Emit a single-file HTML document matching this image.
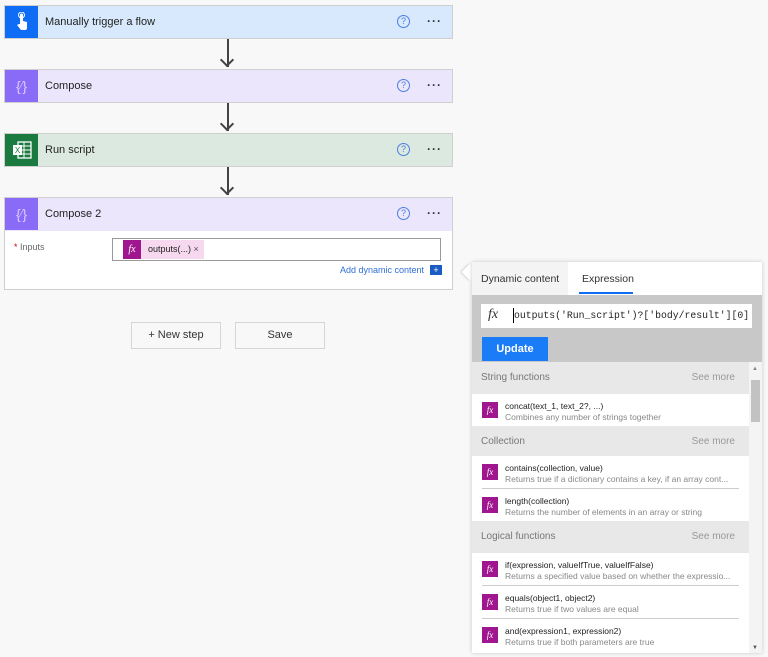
<!DOCTYPE html>
<html><head><style>
*{box-sizing:border-box;margin:0;padding:0}
body{width:768px;height:657px;background:#f8f8f8;font-family:"Liberation Sans",sans-serif;position:relative;overflow:hidden;color:#333}
.card{position:absolute;left:4px;width:449px;height:34px;border:1px solid #cfcfcf}
.ic{position:absolute;left:0;top:0;width:33px;height:32px;display:flex;align-items:center;justify-content:center}
.t{position:absolute;left:40px;top:10px;font-size:11px;color:#222}
.q{position:absolute;left:392px;top:9px;width:13px;height:13px;border:1.3px solid #4a7ee0;border-radius:50%;font-size:9px;color:#4a7ee0;text-align:center;line-height:11px}
.d{position:absolute;left:422px;top:8px;font-size:12px;letter-spacing:1px;color:#333;font-weight:bold}
.arr{position:absolute;left:227px;width:2px;background:#444}
.ah{position:absolute;left:222px;width:10px;height:10px;border-right:2px solid #444;border-bottom:2px solid #444;transform:rotate(45deg)}
.btn{position:absolute;top:322px;height:27px;border:1px solid #d6d6d6;background:#f8f8f8;font-size:11px;text-align:center;line-height:25px;color:#333}
.panel{position:absolute;left:472px;top:262px;width:290px;height:391px;background:#fff;box-shadow:0 0 4px rgba(0,0,0,.2)}
.hd{position:absolute;left:0;width:277px;height:32px;background:#e8e8e8;font-size:10px;color:#777;padding:10px 9px}
.hd span{position:absolute;right:14px;top:10px;color:#999}
.it{position:absolute;left:0;width:277px;height:33px;background:#fff}
.it .fx{position:absolute;left:10px;top:8px;width:16px;height:16px;background:#a0168e;color:#fff;font-family:"Liberation Serif",serif;font-style:italic;font-size:9px;text-align:center;line-height:16px}
.it b{position:absolute;left:33px;top:7px;font-size:8.5px;font-weight:normal;color:#222}
.it i{position:absolute;left:33px;top:18px;font-size:8.5px;font-style:normal;color:#888;white-space:nowrap}
.it.l::after{content:"";position:absolute;left:10px;right:10px;bottom:0;border-bottom:1px solid #ccc}
</style></head><body>
<div class="card" style="top:5px;background:#d8e9fd"><div class="ic" style="background:#0f6cf5"><svg width="16" height="20" viewBox="0 0 16 20"><path d="M6 12V3a1.5 1.5 0 013 0v6l4 1v6a2 2 0 01-2 2H7l-4-5 2-1z" fill="#fff"/><circle cx="7.5" cy="3" r="3" fill="none" stroke="#fff" stroke-width="1"/></svg></div><div class="t">Manually trigger a flow</div><div class="q">?</div><div class="d">···</div></div>
<div class="arr" style="top:39px;height:28px"></div><div class="ah" style="top:55px"></div>
<div class="card" style="top:69px;background:#ece6fc"><div class="ic" style="background:#8a6bf7;color:#d8ccff;font-size:14px">{<span style="font-size:10px">∕</span>}</div><div class="t">Compose</div><div class="q">?</div><div class="d">···</div></div>
<div class="arr" style="top:103px;height:28px"></div><div class="ah" style="top:119px"></div>
<div class="card" style="top:133px;background:#dce9e1"><div class="ic" style="background:#1b7a3f"><svg width="20" height="18" viewBox="0 0 20 18"><rect x="6" y="1" width="13" height="16" fill="none" stroke="#fff" stroke-width="1.3"/><path d="M6 5h13M6 9h13M6 13h13M12 1v16" stroke="#fff" stroke-width="1"/><rect x="1" y="4" width="9" height="10" fill="#fff"/><text x="5.5" y="12" font-size="8" fill="#1b7a3f" text-anchor="middle" font-family="Liberation Sans">X</text></svg></div><div class="t">Run script</div><div class="q">?</div><div class="d">···</div></div>
<div class="arr" style="top:167px;height:28px"></div><div class="ah" style="top:183px"></div>
<div class="card" style="top:197px;height:93px;background:#fff"><div style="position:absolute;left:0;top:0;width:447px;height:33px;background:#ece6fc"></div><div class="ic" style="background:#8a6bf7;color:#d8ccff;font-size:14px">{<span style="font-size:10px">∕</span>}</div><div class="t">Compose 2</div><div class="q">?</div><div class="d">···</div>
<div style="position:absolute;left:9px;top:44px;font-size:9px;color:#666"><span style="color:#c00">*</span> Inputs</div>
<div style="position:absolute;left:107px;top:40px;width:329px;height:23px;border:1px solid #999;background:#fff"><div style="position:absolute;left:10px;top:1px;width:81px;height:19px;background:#f6d9ee"><div style="position:absolute;left:0;top:0;width:18px;height:19px;background:#a0168e;color:#fff;font-family:'Liberation Serif',serif;font-style:italic;font-size:10px;text-align:center;line-height:19px">fx</div><span style="position:absolute;left:25px;top:4px;font-size:9px;color:#222">outputs(...) <span style="color:#555">×</span></span></div></div>
<div style="position:absolute;left:335px;top:67px;font-size:9px;color:#2f6fd4">Add dynamic content</div><div style="position:absolute;left:425px;top:67px;width:12px;height:10px;background:#1a5bc4;color:#fff;font-size:9px;text-align:center;line-height:10px">+</div>
</div>
<div class="btn" style="left:131px;width:90px">+ New step</div>
<div class="btn" style="left:235px;width:90px">Save</div>
<div style="position:absolute;left:464px;top:266px;width:12px;height:12px;background:#fff;transform:rotate(45deg);box-shadow:-1px 1px 2px rgba(0,0,0,.15)"></div>
<div class="panel">
<div style="position:absolute;left:0;top:0;width:96px;height:33px;background:#f4f4f4;font-size:10.5px;color:#333;padding:11px 9px;white-space:nowrap">Dynamic content</div>
<div style="position:absolute;left:110px;top:11px;font-size:10.5px;color:#333">Expression</div>
<div style="position:absolute;left:107px;top:30px;width:54px;height:2px;background:#0f6cf5"></div>
<div style="position:absolute;left:0;top:33px;width:290px;height:67px;background:#c8c8c8">
<div style="position:absolute;left:9px;top:9px;width:271px;height:24px;background:#fff;overflow:hidden"><span style="position:absolute;left:7px;top:3px;font-family:'Liberation Serif',serif;font-style:italic;font-size:14px;color:#333">fx</span><span style="position:absolute;left:32px;top:4px;width:1px;height:15px;background:#000"></span><span style="position:absolute;left:33px;top:6px;font-family:'Liberation Mono',monospace;font-size:9.8px;color:#222;white-space:nowrap">outputs('Run_script')?['body/result'][0]</span></div>
<div style="position:absolute;left:10px;top:42px;width:66px;height:24px;background:#1a7cf7;color:#fff;font-size:11px;font-weight:bold;text-align:center;line-height:24px">Update</div></div>
<div class="hd" style="top:100px">String functions<span>See more</span></div>
<div class="it" style="top:132px"><div class="fx">fx</div><b>concat(text_1, text_2?, ...)</b><i>Combines any number of strings together</i></div>
<div class="hd" style="top:164px">Collection<span>See more</span></div>
<div class="it l" style="top:194px"><div class="fx">fx</div><b>contains(collection, value)</b><i>Returns true if a dictionary contains a key, if an array cont...</i></div>
<div class="it" style="top:227px"><div class="fx">fx</div><b>length(collection)</b><i>Returns the number of elements in an array or string</i></div>
<div class="hd" style="top:259px">Logical functions<span>See more</span></div>
<div class="it l" style="top:291px"><div class="fx">fx</div><b>if(expression, valueIfTrue, valueIfFalse)</b><i>Returns a specified value based on whether the expressio...</i></div>
<div class="it l" style="top:324px"><div class="fx">fx</div><b>equals(object1, object2)</b><i>Returns true if two values are equal</i></div>
<div class="it" style="top:357px"><div class="fx">fx</div><b>and(expression1, expression2)</b><i>Returns true if both parameters are true</i></div>
<div style="position:absolute;left:277px;top:100px;width:13px;height:291px;background:#f4f4f4"><div style="position:absolute;left:2px;top:18px;width:9px;height:42px;background:#c2c2c2"></div><div style="position:absolute;left:3px;top:4px;font-size:6px;color:#888">▲</div><div style="position:absolute;left:3px;bottom:2px;font-size:6px;color:#555">▼</div></div>
</div>
</body></html>
